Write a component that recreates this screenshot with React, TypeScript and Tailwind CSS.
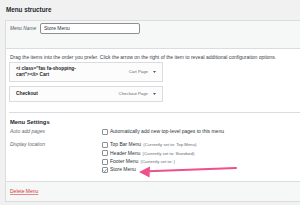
import React from "react";

const items = [
  { title: ['<i class="fas fa-shopping-', 'cart"></i> Cart'], type: "Cart Page", tall: true },
  { title: ["Checkout"], type: "Checkout Page", tall: false },
];

const locations = [
  { name: "Top Bar Menu", note: "(Currently set to: Top Menu)", checked: false },
  { name: "Header Menu", note: "(Currently set to: Standard)", checked: false },
  { name: "Footer Menu", note: "(Currently set to: )", checked: false },
  { name: "Store Menu", note: "", checked: true },
];

const Checkbox = ({ checked }: { checked?: boolean }) => (
  <span className="w-[6px] h-[6px] shrink-0 border border-[#8c8f94] rounded-[1px] bg-white flex items-center justify-center">
    {checked && (
      <svg width="5" height="5" viewBox="0 0 10 10">
        <path d="M1.5 5.2 L4 7.8 L8.8 1.8" fill="none" stroke="#2271b1" strokeWidth="1.6" />
      </svg>
    )}
  </span>
);

const Caret = () => (
  <svg width="3" height="2" viewBox="0 0 6 4" className="shrink-0">
    <path d="M0 0 L6 0 L3 4 Z" fill="#50575e" />
  </svg>
);

const App = () => {
  return (
    <div className="relative w-[300px] h-[205px] overflow-hidden bg-[#f1f1f1] text-[#2c3338] font-['Liberation_Sans',Arial,sans-serif]">
      <h2 className="h-[20px] pl-[6px] pt-[6px] text-[6.3px] leading-[8px] font-semibold text-[#23282d]">
        Menu structure
      </h2>

      <div className="ml-[5px] bg-white border-l border-t border-b border-[#dcdcde]">
        {/* header with menu name */}
        <div className="h-[28px] bg-[#f6f7f7] border-b border-[#dcdcde] pt-[2px] pl-[4px] flex items-start">
          <label className="w-[30px] h-[11px] flex items-center italic text-[4.8px] text-[#50575e]">
            Menu Name
          </label>
          <div className="w-[100px] h-[11px] bg-white border border-[#8c8f94] rounded-[2px] flex items-center pl-[3px] text-[5px]">
            Store Menu
          </div>
        </div>

        {/* body */}
        <div className="h-[132px]">
          <p className="h-[13px] pt-[5px] pl-[4px] text-[5px] leading-[6px] text-[#3c434a] whitespace-nowrap">
            Drag the items into the order you prefer. Click the arrow on the right of the item to reveal additional configuration options.
          </p>

          <div className="ml-[3px] w-[154px] flex flex-col gap-[4px]">
            {items.map((item) => (
              <div
                key={item.type}
                className={
                  "border border-[#dcdcde] bg-[#fcfcfc] flex items-center justify-between pl-[6px] pr-[6px] " +
                  (item.tall ? "h-[20px]" : "h-[16px]")
                }
              >
                <span className="text-[4.8px] leading-[6.5px] font-semibold text-[#1d2327]">
                  {item.title.map((t, i) => (
                    <span key={i} className="block">
                      {t}
                    </span>
                  ))}
                </span>
                <span className="flex items-center gap-[5px] text-[4.3px] text-[#646970]">
                  {item.type}
                  <Caret />
                </span>
              </div>
            ))}
          </div>

          <div className="ml-[3px] mt-[10px] border-t border-[#dcdcde]">
            <h3 className="pt-[6px] h-[15px] pl-[1px] text-[5.8px] leading-[7px] font-semibold text-[#23282d]">
              Menu Settings
            </h3>
            <div className="flex h-[8px] items-center">
              <span className="w-[93px] pl-[1px] italic text-[5px] text-[#646970]">Auto add pages</span>
              <Checkbox />
              <span className="ml-[2px] text-[5px]">Automatically add new top-level pages to this menu</span>
            </div>
            <div className="flex mt-[5px]">
              <span className="w-[93px] h-[8.33px] flex items-center pl-[1px] italic text-[5px] text-[#646970]">
                Display location
              </span>
              <div className="flex flex-col">
                {locations.map((loc) => (
                  <div key={loc.name} className="h-[8.33px] flex items-center">
                    <Checkbox checked={loc.checked} />
                    <span className="ml-[2px] text-[5px] whitespace-nowrap">
                      {loc.name}
                      {loc.note && (
                        <span className="ml-[1px] text-[4.3px] text-[#646970]"> {loc.note}</span>
                      )}
                    </span>
                  </div>
                ))}
              </div>
            </div>
          </div>
        </div>

        {/* footer */}
        <div className="h-[20px] bg-[#f6f7f7] border-t border-[#dcdcde] flex items-center pl-[4px]">
          <a className="text-[5px] text-[#d63638] underline decoration-[#e58a8b]">Delete Menu</a>
        </div>
      </div>

      {/* annotation arrow */}
      <svg className="absolute inset-0 pointer-events-none" width="300" height="205" viewBox="0 0 300 205">
        <path d="M236 168 L148 171.2" stroke="#ef4f8b" strokeWidth="2" strokeLinecap="round" fill="none" />
        <polygon points="139,172 150,166.5 149.5,177.5" fill="#ef4f8b" />
      </svg>
    </div>
  );
};

export default App;
